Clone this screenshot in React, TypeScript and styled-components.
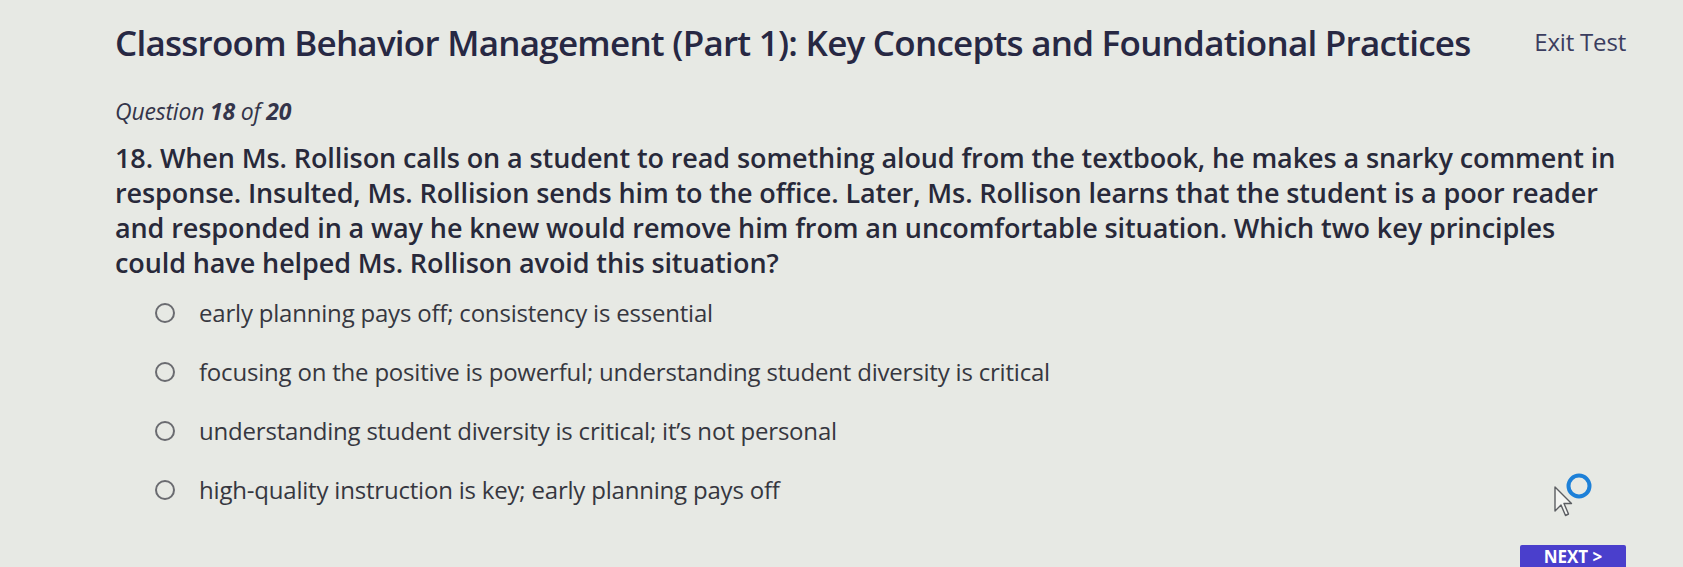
import React from 'react'
import styled, { createGlobalStyle } from 'styled-components'

const GlobalStyle = createGlobalStyle`
  html, body {
    margin: 0;
    padding: 0;
    background: #e7e9e4;
  }
  body {
    font-family: "Open Sans", "Noto Sans", sans-serif;
  }
`

const options = [
  'early planning pays off; consistency is essential',
  'focusing on the positive is powerful; understanding student diversity is critical',
  'understanding student diversity is critical; it’s not personal',
  'high-quality instruction is key; early planning pays off',
]

export default function App() {
  return (
    <>
      <GlobalStyle />
      <Page>
        <Header>
          <Title>Classroom Behavior Management (Part 1): Key Concepts and Foundational Practices</Title>
          <ExitLink>Exit Test</ExitLink>
        </Header>

        <Counter>
          Question <b>18</b> of <b>20</b>
        </Counter>

        <Prompt>
          18. When Ms. Rollison calls on a student to read something aloud from the textbook, he makes a snarky comment in
          response. Insulted, Ms. Rollision sends him to the office. Later, Ms. Rollison learns that the student is a poor reader
          and responded in a way he knew would remove him from an uncomfortable situation. Which two key principles
          could have helped Ms. Rollison avoid this situation?
        </Prompt>

        <OptionList>
          {options.map((text, idx) => (
            <OptionRow key={`opt-${idx}`}>
              <Radio />
              <OptionText>{text}</OptionText>
            </OptionRow>
          ))}
        </OptionList>

        <Footer>
          <NextButton>NEXT &gt;</NextButton>
        </Footer>

        <Pointer>
          <svg width="44" height="46" viewBox="0 0 44 46">
            <circle cx="27" cy="13" r="10.5" fill="none" stroke="#1d80d8" strokeWidth="4" />
            <path
              d="M3 14 L3 38 L9 32 L13.5 42.5 L16.5 41 L12 30.5 L19.5 30.5 Z"
              fill="#f4f5f2"
              stroke="#5c5e62"
              strokeWidth="1.4"
              strokeLinejoin="round"
            />
          </svg>
        </Pointer>
      </Page>
    </>
  )
}

const Page = styled.div`
  position: relative;
  height: 567px;
  overflow: hidden;
  padding: 21px 57px 0 115px;
  box-sizing: border-box;
  color: #2b2c40;
`

const Header = styled.div`
  display: flex;
  justify-content: space-between;
  align-items: center;
  height: 44px;
`

const Title = styled.h1`
  margin: 0;
  font-size: 35px;
  line-height: 44px;
  font-weight: 600;
  letter-spacing: -0.75px;
  color: #272843;
  white-space: nowrap;
`

const ExitLink = styled.a`
  flex-shrink: 0;
  white-space: nowrap;
  font-size: 24px;
  letter-spacing: -0.2px;
  color: #3b3d5f;
  cursor: pointer;
  transform: translateY(-2px);
`

const Counter = styled.div`
  margin-top: 30px;
  font-size: 23px;
  font-style: italic;
  letter-spacing: -0.2px;
  color: #34354a;

  b {
    font-weight: 700;
  }
`

const Prompt = styled.p`
  margin: 13px 0 0;
  font-size: 27px;
  line-height: 35px;
  font-weight: 600;
  letter-spacing: -0.1px;
  color: #28293a;
  max-width: 1508px;
`

const OptionList = styled.ul`
  list-style: none;
  margin: 16px 0 0;
  padding: 0 0 0 40px;
  display: flex;
  flex-direction: column;
  gap: 26px;
`

const OptionRow = styled.li`
  display: flex;
  align-items: center;
  gap: 24px;
  height: 33px;
`

const Radio = styled.span`
  width: 16px;
  height: 16px;
  border-radius: 50%;
  border: 2px solid #6a6b70;
  flex-shrink: 0;
`

const OptionText = styled.span`
  font-size: 24px;
  letter-spacing: -0.2px;
  color: #36373f;
`

const Footer = styled.div`
  display: flex;
  justify-content: flex-end;
  margin-top: 39px;
`

const NextButton = styled.button`
  display: flex;
  align-items: flex-start;
  justify-content: center;
  width: 106px;
  height: 34px;
  border: none;
  border-radius: 2px;
  background: #4a3fcc;
  color: #ffffff;
  font-family: "Open Sans", sans-serif;
  font-size: 17px;
  line-height: 18px;
  font-weight: 700;
  padding: 3px 0 0;
  cursor: pointer;
`

const Pointer = styled.div`
  position: absolute;
  left: 1552px;
  top: 473px;
  pointer-events: none;
`
